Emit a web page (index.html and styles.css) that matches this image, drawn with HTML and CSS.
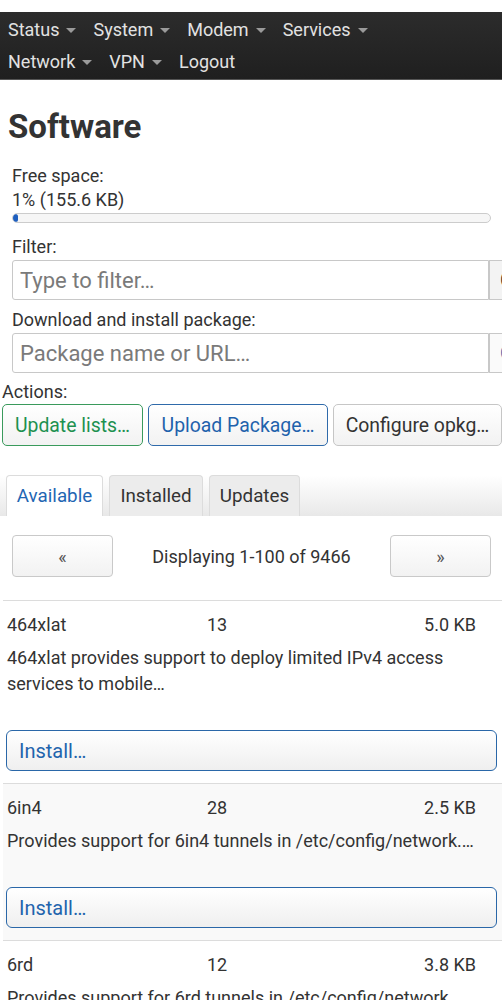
FILE: index.html
```html
<!DOCTYPE html>
<html lang="en">
<head>
<meta charset="utf-8">
<title>Software</title>
<link rel="stylesheet" href="styles.css">
</head>
<body>
<header class="topbar">
  <nav class="menu">
    <div class="menu-row">
      <span class="menu-item">Status<i class="caret"></i></span>
      <span class="menu-item">System<i class="caret"></i></span>
      <span class="menu-item">Modem<i class="caret"></i></span>
      <span class="menu-item">Services<i class="caret"></i></span>
    </div>
    <div class="menu-row">
      <span class="menu-item">Network<i class="caret"></i></span>
      <span class="menu-item">VPN<i class="caret"></i></span>
      <span class="menu-item">Logout</span>
    </div>
  </nav>
</header>

<main class="page">
  <h1 class="title">Software</h1>

  <section class="controls">
    <div class="label">Free space:</div>
    <div class="label">1% (155.6 KB)</div>
    <div class="progress"><div class="progress-fill" style="width:1%"></div></div>

    <div class="label gap">Filter:</div>
    <div class="input-group">
      <input class="text-input" type="text" placeholder="Type to filter…">
      <button class="addon">Clear</button>
    </div>

    <div class="label gap-sm">Download and install package:</div>
    <div class="input-group">
      <input class="text-input" type="text" placeholder="Package name or URL…">
      <button class="addon addon-blue">OK</button>
    </div>
  </section>

  <section class="actions">
    <div class="actions-label">Actions:</div>
    <div class="action-buttons">
      <button class="btn btn-green">Update lists…</button>
      <button class="btn btn-blue">Upload Package…</button>
      <button class="btn btn-gray">Configure opkg…</button>
    </div>
  </section>

  <div class="tabs">
    <span class="tab active">Available</span>
    <span class="tab">Installed</span>
    <span class="tab">Updates</span>
  </div>

  <div class="pager">
    <button class="pager-btn">«</button>
    <span class="pager-text">Displaying 1-100 of 9466</span>
    <button class="pager-btn">»</button>
  </div>

  <div class="packages">
    <div class="pkg">
      <div class="pkg-head">
        <span class="pkg-name">464xlat</span>
        <span class="pkg-ver">13</span>
        <span class="pkg-size">5.0 KB</span>
      </div>
      <div class="pkg-desc">464xlat provides support to deploy limited IPv4 access services to mobile…</div>
      <button class="install">Install…</button>
    </div>
    <div class="pkg alt">
      <div class="pkg-head">
        <span class="pkg-name">6in4</span>
        <span class="pkg-ver">28</span>
        <span class="pkg-size">2.5 KB</span>
      </div>
      <div class="pkg-desc">Provides support for 6in4 tunnels in /etc/config/network.…</div>
      <button class="install">Install…</button>
    </div>
    <div class="pkg">
      <div class="pkg-head">
        <span class="pkg-name">6rd</span>
        <span class="pkg-ver">12</span>
        <span class="pkg-size">3.8 KB</span>
      </div>
      <div class="pkg-desc">Provides support for 6rd tunnels in /etc/config/network.…</div>
      <button class="install">Install…</button>
    </div>
  </div>
</main>
</body>
</html>
```

FILE: styles.css
```css
html, body {
  margin: 0;
  padding: 0;
  overflow-x: hidden;
  background: #fff;
}

body {
  font-family: Roboto, "Liberation Sans", Arial, sans-serif;
  font-size: 18px;
  color: #333;
  width: 502px;
}

button, input {
  font-family: inherit;
}

/* ---------- top bar ---------- */
.topbar {
  margin-top: 12px;
  background: linear-gradient(to bottom, #2c2c2c, #1f1f1f);
  border-bottom: 1px solid #555;
  padding: 1px 0 2px 8px;
}

.menu-row {
  display: flex;
  height: 32px;
  align-items: center;
}

.menu-item {
  display: inline-flex;
  align-items: center;
  gap: 7px;
  margin-right: 17px;
  font-size: 18px;
  color: #e2e2e2;
}

.caret {
  display: inline-block;
  width: 0;
  height: 0;
  border-left: 5px solid transparent;
  border-right: 5px solid transparent;
  border-top: 5px solid #9a9a9a;
  margin-top: 2px;
}

/* ---------- title ---------- */
.title {
  margin: 27px 0 0 8px;
  font-size: 33px;
  line-height: 40px;
  font-weight: 700;
  color: #333;
}

/* ---------- controls ---------- */
.controls {
  margin-top: 17px;
  padding-left: 12px;
}

.label {
  line-height: 24px;
  font-size: 18px;
  color: #333;
}

.label.gap { margin-top: 12px; }
.label.gap-sm { margin-top: 8px; }

.progress {
  margin-top: 1px;
  width: 477px;
  height: 8px;
  border: 1px solid #ccc;
  border-radius: 5px;
  background: #f6f6f6;
  overflow: hidden;
}

.progress-fill {
  height: 100%;
  min-width: 5px;
  background: #1e5fbf;
  border-radius: 4px;
}

.input-group {
  display: flex;
  margin-top: 1px;
  height: 40px;
}

.text-input {
  flex: 0 0 477px;
  box-sizing: border-box;
  height: 40px;
  border: 1px solid #c8c8c8;
  border-radius: 3px 0 0 3px;
  padding: 0 7px;
  font-size: 22px;
  color: #333;
  background: #fff;
  outline: none;
}

.text-input::placeholder {
  color: #7a7a7a;
}

.addon {
  flex: 0 0 auto;
  height: 40px;
  border: 1px solid #c8c8c8;
  background: #f3f3f3;
  padding: 0 10px;
  font-size: 20px;
  color: #333;
}

.addon-blue {
  color: #1f66b3;
  background: #fafafa;
}

/* ---------- actions ---------- */
.actions {
  margin-top: 8px;
  padding-left: 2px;
}

.actions-label {
  line-height: 22px;
}

.action-buttons {
  display: flex;
  gap: 5px;
  margin-top: 1px;
}

.btn {
  height: 42px;
  padding: 0 10px;
  border-radius: 5px;
  font-size: 19.4px;
  background: linear-gradient(to bottom, #fff, #f2f2f2);
  white-space: nowrap;
}

.btn-green { border: 1px solid #3a9a5c; color: #1d9150; width: 141px; }
.btn-blue  { border: 1px solid #2f6aaa; color: #1f62ac; width: 180px; }
.btn-gray  { border: 1px solid #c6c6c6; color: #333; width: 169px; }

/* ---------- tabs ---------- */
.tabs {
  margin-top: 29px;
  display: flex;
  gap: 6px;
  padding-left: 6px;
  align-items: flex-end;
  background: linear-gradient(to bottom, #fff 0%, #f4f4f4 50%, #e8e8e8 100%);
}

.tab {
  box-sizing: border-box;
  height: 41px;
  display: inline-flex;
  align-items: center;
  justify-content: center;
  padding: 0 10px;
  border: 1px solid #dcdcdc;
  border-bottom: none;
  border-radius: 4px 4px 0 0;
  background: #ececec;
  font-size: 18.8px;
  color: #333;
}

.tab.active {
  background: #fff;
  color: #1f66b3;
  width: 97px;
}

.tab:nth-child(2) { width: 94px; }
.tab:nth-child(3) { width: 91px; }

/* ---------- pager ---------- */
.pager {
  margin-top: 19px;
  padding: 0 11px 0 12px;
  display: flex;
  align-items: center;
  justify-content: space-between;
}

.pager-btn {
  width: 101px;
  height: 42px;
  border: 1px solid #c9c9c9;
  border-radius: 4px;
  background: linear-gradient(to bottom, #fff, #f2f2f2);
  font-size: 18px;
  color: #555;
}

.pager-text {
  font-size: 18px;
  color: #333;
}

/* ---------- packages ---------- */
.packages {
  margin: 23px 0 0 3px;
}

.pkg {
  border-top: 1px solid #dcdcdc;
  padding: 11px 5px 12px 3px;
  background: #fff;
}

.pkg.alt {
  background: #f9f9f9;
}

.pkg-head {
  display: grid;
  grid-template-columns: 200px 1fr auto;
  line-height: 26px;
  padding-left: 1px;
}

.pkg-size {
  padding-right: 21px;
}

.pkg-desc {
  margin-top: 7px;
  line-height: 26px;
  padding-left: 1px;
  padding-right: 8px;
}

.install {
  display: block;
  width: 100%;
  box-sizing: border-box;
  margin-top: 33px;
  height: 41px;
  border: 1px solid #2a67a8;
  border-radius: 6px;
  background: linear-gradient(to bottom, #fff, #efefef);
  color: #1f64ad;
  font-size: 20px;
  text-align: left;
  padding: 0 12px;
}
```
